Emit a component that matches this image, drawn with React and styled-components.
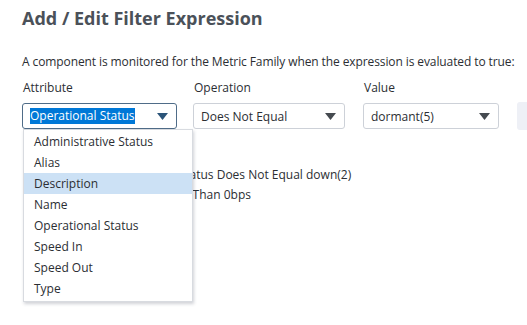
import React, {useState} from 'react'
import styled, {createGlobalStyle} from 'styled-components'

const attributes = [
  'Administrative Status',
  'Alias',
  'Description',
  'Name',
  'Operational Status',
  'Speed In',
  'Speed Out',
  'Type',
]

const Arrow = ({color}) => (
  <svg width="11" height="7" viewBox="0 0 11 7">
    <path d="M0 0 H11 L5.5 7 Z" fill={color}/>
  </svg>
)

const App = () => {
  const [hover] = useState('Description')

  return (
    <>
      <Global/>
      <Page>
        <Title>Add / Edit Filter Expression</Title>
        <Intro>A component is monitored for the Metric Family when the expression is evaluated to true:</Intro>
        <Fields>
          <Field gap={16}>
            <Label>Attribute</Label>
            <Select width={155} focused>
              <Selected>Operational Status</Selected>
              <Arrow color="#2b5479"/>
            </Select>
            <Menu>
              {attributes.map(a => (
                <Option key={a} active={a === hover}>{a}</Option>
              ))}
            </Menu>
          </Field>
          <Field gap={18}>
            <Label>Operation</Label>
            <Select width={152}>
              <span>Does Not Equal</span>
              <Arrow color="#454a50"/>
            </Select>
          </Field>
          <Field gap={18}>
            <Label>Value</Label>
            <Select width={136}>
              <span>dormant(5)</span>
              <Arrow color="#454a50"/>
            </Select>
          </Field>
          <Field gap={0}>
            <Label>&nbsp;</Label>
            <AddButton/>
          </Field>
        </Fields>
        <Expressions>
          <Line>Operational Status Does Not Equal down(2)</Line>
          <Line indent>OR Speed In Greater Than 0bps</Line>
        </Expressions>
      </Page>
    </>
  )
}

export default App

const Global = createGlobalStyle`
body{
  margin:0;
  background:#fff;
  font-family:"Open Sans", "DejaVu Sans", sans-serif;
  color:#2b2e33;
  overflow:hidden;
}
`
const Page = styled.div`
width:527px;
height:325px;
box-sizing:border-box;
padding:6px 0 0 22px;
overflow:hidden;
`
const Title = styled.h1`
margin:0;
font-size:18px;
line-height:24px;
font-weight:700;
color:#4b5159;
`
const Intro = styled.div`
margin-top:24px;
font-size:12px;
line-height:16px;
white-space:nowrap;
letter-spacing:-0.1px;
`
const Fields = styled.div`
display:flex;
margin-top:10px;
`
const Field = styled.div`
position:relative;
display:flex;
flex-direction:column;
margin-right:${p => p.gap}px;
`
const Label = styled.div`
font-size:12px;
line-height:16px;
padding-left:1px;
margin-bottom:7px;
`
const Select = styled.div`
width:${p => p.width}px;
height:26px;
box-sizing:border-box;
display:flex;
align-items:center;
justify-content:space-between;
padding:0 8px 0 7px;
border:1px solid ${p => p.focused ? '#4f6c88' : '#cdd1d8'};
border-radius:3px;
font-size:12px;
background:#fff;
`
const Selected = styled.span`
background:#0078d7;
color:#fff;
line-height:16px;
`
const AddButton = styled.div`
width:40px;
height:28px;
margin-top:-1px;
border-radius:3px;
background:#eef0f6;
`
const Menu = styled.div`
position:absolute;
z-index:2;
top:49px;
left:1px;
width:170px;
box-sizing:border-box;
padding:1px 0 2px;
background:#fff;
border:1px solid #d8dbe0;
box-shadow:1px 2px 3px rgba(70,80,100,0.25);
`
const Option = styled.div`
height:21px;
line-height:21px;
padding-left:10px;
font-size:12px;
background:${p => p.active ? '#cce1f5' : 'transparent'};
`
const Expressions = styled.div`
margin-top:35px;
padding-left:87px;
`
const Line = styled.div`
font-size:12px;
line-height:20px;
white-space:nowrap;
margin-left:${p => p.indent ? '-34px' : '0'};
`
